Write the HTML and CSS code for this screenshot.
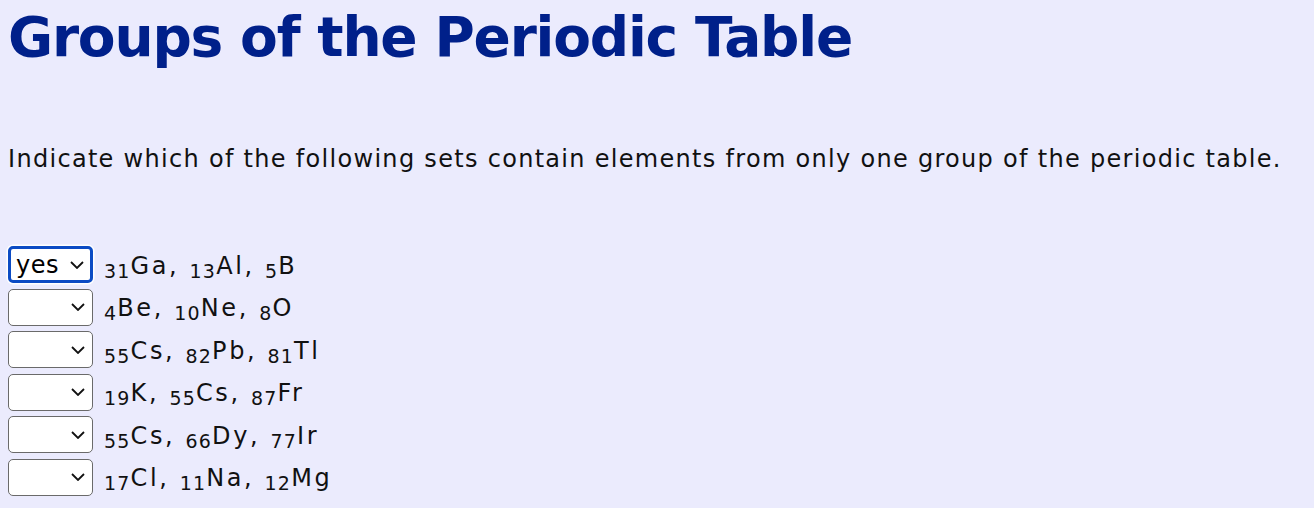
FILE: index.html
```html
<!DOCTYPE html>
<html>
<head>
<meta charset="utf-8">
<link rel="stylesheet" href="styles.css">
</head>
<body>
<h1 class="title">Groups of the Periodic Table</h1>
<p class="prompt">Indicate which of the following sets contain elements from only one group of the periodic table.</p>
<div class="sets">
  <div class="row">
    <div class="sel focus"><span class="val">yes</span><svg class="chev" viewBox="0 0 14 8"><path d="M1 1 L7 7 L13 1" /></svg></div>
    <span class="set"><sub>31</sub>Ga, <sub>13</sub>Al, <sub>5</sub>B</span>
  </div>
  <div class="row">
    <div class="sel"><span class="val"></span><svg class="chev" viewBox="0 0 14 8"><path d="M1 1 L7 7 L13 1" /></svg></div>
    <span class="set"><sub>4</sub>Be, <sub>10</sub>Ne, <sub>8</sub>O</span>
  </div>
  <div class="row">
    <div class="sel"><span class="val"></span><svg class="chev" viewBox="0 0 14 8"><path d="M1 1 L7 7 L13 1" /></svg></div>
    <span class="set"><sub>55</sub>Cs, <sub>82</sub>Pb, <sub>81</sub>Tl</span>
  </div>
  <div class="row">
    <div class="sel"><span class="val"></span><svg class="chev" viewBox="0 0 14 8"><path d="M1 1 L7 7 L13 1" /></svg></div>
    <span class="set"><sub>19</sub>K, <sub>55</sub>Cs, <sub>87</sub>Fr</span>
  </div>
  <div class="row">
    <div class="sel"><span class="val"></span><svg class="chev" viewBox="0 0 14 8"><path d="M1 1 L7 7 L13 1" /></svg></div>
    <span class="set"><sub>55</sub>Cs, <sub>66</sub>Dy, <sub>77</sub>Ir</span>
  </div>
  <div class="row">
    <div class="sel"><span class="val"></span><svg class="chev" viewBox="0 0 14 8"><path d="M1 1 L7 7 L13 1" /></svg></div>
    <span class="set"><sub>17</sub>Cl, <sub>11</sub>Na, <sub>12</sub>Mg</span>
  </div>
</div>
</body>
</html>
```
FILE: styles.css
```css
html, body {
  margin: 0;
  padding: 0;
  background: #ebebfd;
}
body {
  padding: 0 8px;
  font-family: "DejaVu Sans", Verdana, sans-serif;
  color: #000;
}
.title {
  margin: 0;
  padding-top: 7px;
  font-size: 55px;
  line-height: 60px;
  letter-spacing: -1.2px;
  font-weight: bold;
  color: #00208a;
}
.prompt {
  margin: 77px 0 0 0;
  font-size: 24px;
  line-height: 30px;
  letter-spacing: 1.3px;
  color: #111;
}
.sets {
  margin-top: 72px;
  display: flex;
  flex-direction: column;
  gap: 5.6px;
}
.row {
  display: flex;
  align-items: center;
  gap: 11px;
  height: 37px;
}
.sel {
  box-sizing: border-box;
  width: 85px;
  height: 37px;
  border: 1.5px solid #6a6a6a;
  border-radius: 5px;
  background: #fff;
  display: flex;
  align-items: center;
  padding: 0 7px 0 6px;
}
.sel.focus {
  border: 3px solid #0b4bc4;
  box-shadow: 0 0 0 1.5px #fff;
  padding-left: 5px;
  padding-right: 6px;
}
.val {
  flex: 1;
  font-size: 24px;
  letter-spacing: 0.5px;
}
.chev {
  width: 14px;
  height: 8px;
  fill: none;
  stroke: #111;
  stroke-width: 1.8;
}
.set {
  font-size: 24px;
  line-height: 30px;
  letter-spacing: 2.6px;
  color: #111;
  padding-top: 2px;
}
.set sub {
  font-size: 19px;
  vertical-align: -4px;
  line-height: 0;
  letter-spacing: 1.2px;
}
```
